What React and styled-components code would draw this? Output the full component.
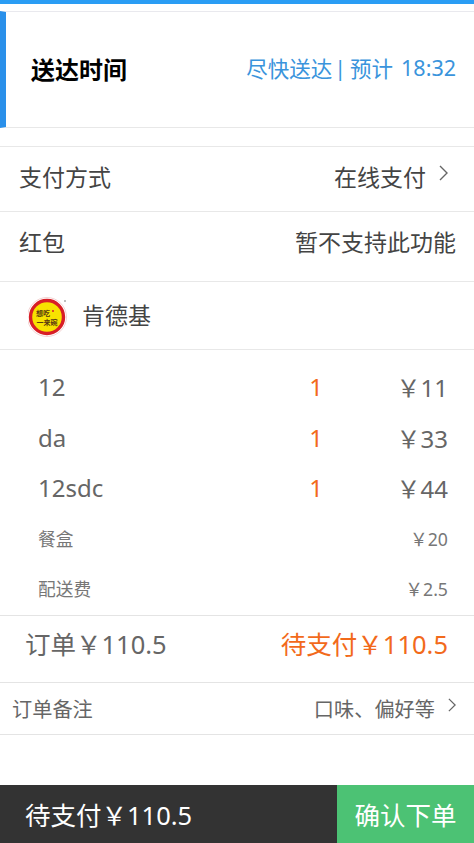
import styled, { createGlobalStyle } from "styled-components";

const GlobalStyle = createGlobalStyle`
  html, body {
    margin: 0;
    padding: 0;
    background: #fff;
    font-family: "Noto Sans", "Noto Sans CJK SC", sans-serif;
    color: #555;
  }
  * {
    box-sizing: border-box;
  }
`;

const Page = styled.div`
  display: flex;
  flex-direction: column;
  height: 100vh;
  overflow: hidden;
`;

const TopBar = styled.div`
  height: 4px;
  background: #2a9df4;
`;

const DeliveryCard = styled.section`
  display: flex;
  align-items: center;
  justify-content: space-between;
  height: 117px;
  margin-top: 7px;
  padding: 0 18px 3px 25px;
  border-top: 1px solid #e9e9ee;
  border-bottom: 1px solid #e8e8e8;
  border-left: 6px solid #2a90ea;
`;

const DeliveryTitle = styled.h2`
  margin: 0;
  font-size: 24px;
  font-weight: 700;
  color: #000;
`;

const DeliveryValue = styled.span`
  display: flex;
  align-items: center;
  margin-bottom: 2px;
  font-size: 21.5px;
  color: #3a94dc;
`;

const Divider = styled.span`
  margin: 0 4px 0 2px;
`;

const DeliveryTime = styled.span`
  margin-left: 8px;
`;

const Section = styled.section`
  margin-top: 18px;
  border-top: 1px solid #e8e8e8;
`;

const InfoRow = styled.div`
  display: flex;
  align-items: center;
  justify-content: space-between;
  height: ${(p) => p.$height}px;
  padding: 0 18px ${(p) => p.$lift || 0}px 19px;
  border-bottom: 1px solid #e8e8e8;
  font-size: 23px;
  color: #444;
`;

const RowValue = styled.span`
  display: flex;
  align-items: center;
  gap: 13px;
  padding-right: ${(p) => p.$inset || 0}px;
`;

const Chevron = styled.svg`
  width: ${(p) => (p.$small ? 8 : 9)}px;
  height: ${(p) => (p.$small ? 14 : 16)}px;
  margin-top: -7px;
  fill: none;
  stroke: #666;
  stroke-width: 1.4;
`;

const ShopRow = styled.div`
  display: flex;
  align-items: center;
  gap: 12px;
  height: 68px;
  padding: 0 0 4px 28px;
  border-bottom: 1px solid #e8e8e8;
  font-size: 23px;
  color: #444;
`;

const ShopLogo = styled.svg`
  width: 42px;
  height: 42px;
  margin-top: 6px;
`;

const Lines = styled.div`
  padding: 11px 0 3px;
  border-bottom: 1px solid #e4e4e4;
`;

const ItemRow = styled.div`
  display: grid;
  grid-template-columns: 1fr 60px 98px;
  align-items: center;
  height: ${(p) => p.$height || 50}px;
  padding: 0 26px 0 38px;
  font-size: 24px;
  color: #666;
`;

const ItemCount = styled.span`
  color: #f26a1b;
  text-align: center;
  padding-right: 8px;
`;

const ItemPrice = styled.span`
  text-align: right;
`;

const FeeRow = styled.div`
  display: flex;
  align-items: center;
  justify-content: space-between;
  height: 50px;
  padding: 2px 26px 0 38px;
  font-size: 17.7px;
  color: #777;
`;

const TotalRow = styled.div`
  display: flex;
  align-items: center;
  justify-content: space-between;
  height: 67px;
  padding: 0 26px 14px 25px;
  border-bottom: 1px solid #e4e4e4;
  font-size: 25.5px;
  color: #666;
`;

const TotalDue = styled.span`
  color: #f26a1b;
`;

const NoteRow = styled.div`
  display: flex;
  align-items: center;
  justify-content: space-between;
  height: 52px;
  padding: 0 18px 0 12px;
  border-bottom: 1px solid #e4e4e4;
  font-size: 20.2px;
  color: #666;
`;

const Footer = styled.footer`
  display: flex;
  height: 58px;
  margin-top: auto;
  font-size: 25.5px;
  color: #fff;
`;

const FooterTotal = styled.div`
  flex: 1;
  display: flex;
  align-items: center;
  padding: 0 0 2px 25px;
  background: #333;
`;

const ConfirmButton = styled.button`
  width: 137px;
  border: none;
  padding: 0 0 2px;
  background: #4cc274;
  color: #fff;
  font: inherit;
  cursor: pointer;
`;

const ArrowRight = ({ small }) => (
  <Chevron $small={small} viewBox="0 0 9 16" preserveAspectRatio="none">
    <path d="M1 1 L8 8 L1 15" />
  </Chevron>
);

const items = [
  { name: "12", count: 1, price: "￥11" },
  { name: "da", count: 1, price: "￥33" },
  { name: "12sdc", count: 1, price: "￥44" },
];

export default function App() {
  return (
    <Page>
      <GlobalStyle />
      <TopBar />
      <DeliveryCard>
        <DeliveryTitle>送达时间</DeliveryTitle>
        <DeliveryValue>
          尽快送达
          <Divider>|</Divider>
          预计
          <DeliveryTime>18:32</DeliveryTime>
        </DeliveryValue>
      </DeliveryCard>
      <Section>
        <InfoRow $height={65} $lift={6}>
          <span>支付方式</span>
          <RowValue $inset={8}>
            在线支付
            <ArrowRight />
          </RowValue>
        </InfoRow>
        <InfoRow $height={70} $lift={12}>
          <span>红包</span>
          <span>暂不支持此功能</span>
        </InfoRow>
      </Section>
      <ShopRow>
        <ShopLogo viewBox="0 0 42 42">
          <circle cx="19" cy="21" r="19.5" fill="#fff" stroke="#f3d4d4" strokeWidth="1" />
          <circle cx="19" cy="21" r="16.5" fill="#f7e200" stroke="#d81e26" strokeWidth="3.4" />
          <text x="15" y="20" fontSize="7" fontWeight="700" fill="#5a3a10" textAnchor="middle">
            想吃
          </text>
          <text x="19" y="28.5" fontSize="7" fontWeight="700" fill="#5a3a10" textAnchor="middle">
            一来碗
          </text>
          <circle cx="25" cy="15" r="1" fill="#d81e26" />
          <circle cx="37" cy="5" r="1" fill="#aaa" />
        </ShopLogo>
        肯德基
      </ShopRow>
      <Lines>
        {items.map((item) => (
          <ItemRow key={item.name} $height={item.name === "12" ? 51 : 50}>
            <span>{item.name}</span>
            <ItemCount>{item.count}</ItemCount>
            <ItemPrice>{item.price}</ItemPrice>
          </ItemRow>
        ))}
        <FeeRow>
          <span>餐盒</span>
          <span>￥20</span>
        </FeeRow>
        <FeeRow>
          <span>配送费</span>
          <span>￥2.5</span>
        </FeeRow>
      </Lines>
      <TotalRow>
        <span>订单￥110.5</span>
        <TotalDue>待支付￥110.5</TotalDue>
      </TotalRow>
      <NoteRow>
        <span>订单备注</span>
        <RowValue>
          口味、偏好等
          <ArrowRight small />
        </RowValue>
      </NoteRow>
      <Footer>
        <FooterTotal>待支付￥110.5</FooterTotal>
        <ConfirmButton>确认下单</ConfirmButton>
      </Footer>
    </Page>
  );
}
